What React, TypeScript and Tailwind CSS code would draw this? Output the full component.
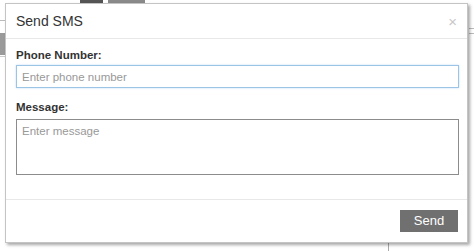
import React from "react";

const font = { fontFamily: '"Liberation Sans", Arial, sans-serif' };

function Backdrop() {
  return (
    <>
      {/* bits of the page behind the dialog */}
      <div className="absolute left-[80px] top-0 h-[3px] w-[23px] bg-[#555]" />
      <div className="absolute left-[108px] top-0 h-[3px] w-[37px] bg-[#8a8a8a]" />
      <div className="absolute left-0 top-[20px] h-px w-[5px] bg-[#bbb]" />
      <div className="absolute left-0 top-[33px] h-[22px] w-[5px] bg-[#9a9a9a]" />
      <div className="absolute left-0 top-[56px] h-px w-[5px] bg-[#ccc]" />
      <div className="absolute right-0 top-[28px] h-px w-[5px] bg-[#bbb]" />
      <div className="absolute right-0 top-[33px] h-px w-[5px] bg-[#bbb]" />
      <div className="absolute bottom-0 left-[388px] h-[8px] w-px bg-[#aaa]" />
    </>
  );
}

export default function App() {
  return (
    <div className="relative h-[251px] w-[474px] overflow-hidden bg-white" style={font}>
      <Backdrop />
      <div className="relative ml-[5px] mt-[3px] flex h-[240px] w-[463px] flex-col border border-[#c4c4c4] bg-white shadow-[2px_2px_3px_rgba(0,0,0,0.35)]">
        <div className="flex h-[35px] items-center justify-between border-b border-[#e8e8e8] pl-[10px] pr-[10px]">
          <h2 className="text-[14px] text-[#333]">Send SMS</h2>
          <button className="text-[15px] leading-none text-[#c8c8c8]">×</button>
        </div>
        <div className="flex flex-col px-[10px] pt-[9px] pb-[24px]">
          <label className="mb-[3px] text-[11.5px] font-bold leading-[14px] text-[#333]">Phone Number:</label>
          <input
            autoFocus
            placeholder="Enter phone number"
            className="h-[23px] w-[443px] border border-[#9cc4e4] px-[5px] text-[11.5px] text-[#333] placeholder-[#999] shadow-[0_0_2px_rgba(102,175,233,0.4)] outline-none"
          />
          <label className="mb-[5px] mt-[12px] text-[11.5px] font-bold leading-[14px] text-[#333]">Message:</label>
          <textarea
            placeholder="Enter message"
            className="h-[56px] w-[443px] resize-none border border-[#8c8c8c] px-[5px] py-[3px] text-[11.5px] text-[#333] placeholder-[#999] outline-none"
          />
        </div>
        <div className="flex justify-end border-t border-[#e8e8e8] px-[9px] pt-[10px]">
          <button className="h-[22px] w-[58px] bg-[#707070] text-[13px] text-white">Send</button>
        </div>
      </div>
    </div>
  );
}
